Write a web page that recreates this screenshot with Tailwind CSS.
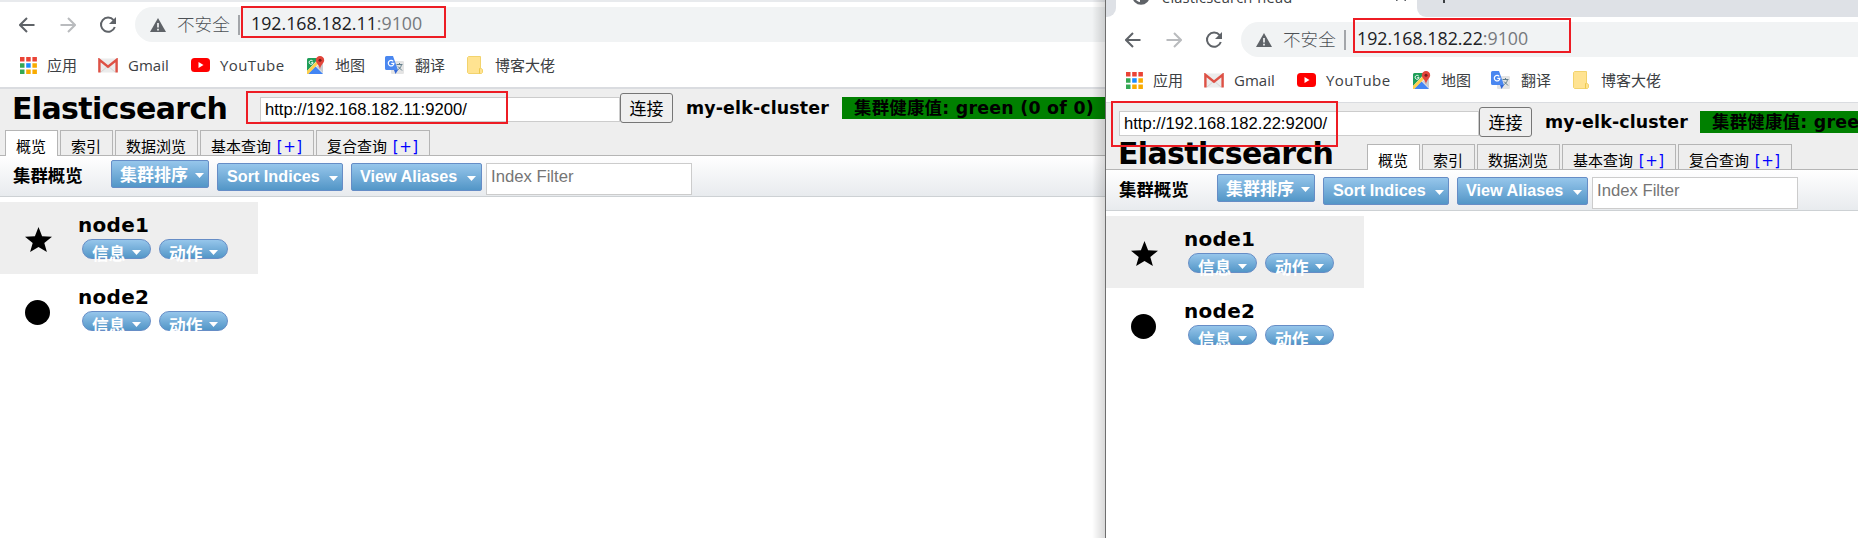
<!DOCTYPE html>
<html lang="zh-CN">

<head>
  <meta charset="UTF-8" />
  <meta name="viewport" content="width=device-width, initial-scale=1.0" />
  <title>elasticsearch-head</title>
  <script src="https://cdn.jsdelivr.net/npm/@tailwindcss/browser@4"></script>
</head>

<body class="bg-white overflow-hidden">
  <!-- Shared icons -->
  <svg class="hidden">
    <symbol id="arrow" viewBox="0 0 16 16">
      <path d="M15.5 8H1.5M8 1L1 8l7 7" fill="none" stroke="currentColor" stroke-width="2" />
    </symbol>
    <symbol id="reload" viewBox="0 0 18 18">
      <path d="M14.6 4.2A7.1 7.1 0 1 0 15.8 11" fill="none" stroke="currentColor" stroke-width="2" />
      <path d="M17 1v7h-7z" fill="currentColor" />
    </symbol>
    <symbol id="warning" viewBox="0 0 16 14">
      <path d="M8 0l8 14H0z" fill="#5f6368" />
      <path d="M8 5v4.5M8 10.7v1.8" stroke="#f1f3f4" stroke-width="1.7" />
    </symbol>
    <symbol id="apps" viewBox="0 0 17 17">
      <path d="M0 0h4.5v4.5H0zM6.2 0h4.5v4.5H6.2zM12.4 0h4.5v4.5h-4.5z" fill="#ea4335" />
      <path d="M0 6.2h4.5v4.5H0zM0 12.4h4.5v4.5H0z" fill="#34a853" />
      <path d="M6.2 6.2h4.5v4.5H6.2z" fill="#1a8cff" />
      <path d="M12.4 6.2h4.5v4.5h-4.5zM6.2 12.4h4.5v4.5H6.2zM12.4 12.4h4.5v4.5h-4.5z" fill="#f9ab00" />
    </symbol>
    <symbol id="gmail" viewBox="0 0 20 15">
      <rect x=".5" y=".5" width="19" height="14" rx="1.5" fill="#ececec" />
      <path d="M3 14l7-6 7 6" fill="none" stroke="#d5d5d5" />
      <path d="M1.4 14.5V1.8L10 8.6l8.6-6.8v12.7" fill="none" stroke="#de5145" stroke-width="2.4" />
    </symbol>
    <symbol id="youtube" viewBox="0 0 19 14">
      <rect width="19" height="14" rx="3.5" fill="#f00" />
      <path d="M7.5 4v6l5-3z" fill="#fff" />
    </symbol>
    <symbol id="maps" viewBox="0 0 19 19">
      <rect x="1" y="2" width="16" height="16" rx="1.5" fill="#e8eaed" />
      <path d="M1 3.5A1.5 1.5 0 0 1 2.5 2H13L1 15z" fill="#1e9e58" />
      <path d="M2 18l7.5-7.5L17 18z" fill="#4285f4" />
      <path d="M1 15L11 5l2 2L2.5 18H1z" fill="#ffd04c" />
      <path d="M2.5 18l7-7 7 7z" fill="#4285f4" />
      <path d="M10.5 10.5L17 17V8z" fill="#c9ccd1" />
      <path d="M6.8 5.2a2 2 0 1 0 .3 1.5H5.2" fill="none" stroke="#fff" stroke-width="1" />
      <path d="M14 0a4.2 4.2 0 0 1 4.2 4.2c0 3-3.7 4.3-4.2 9.300-.5-5-4.200-6.300-4.200-9.300A4.200 4.200 0 0 1 14 0z" fill="#e2453a" />
      <circle cx="14" cy="4.2" r="1.5" fill="#7b1e18" />
    </symbol>
    <symbol id="translate" viewBox="0 0 19 19">
      <rect x="6" y="5" width="13" height="13" rx="1.2" fill="#e4e4e4" />
      <path d="M11.5 8.5h6M14.5 7v1.5M16.5 8.5c-.5 3-2.500 4.500-4 5.500M13 10.500l4 4" fill="none" stroke="#607d8b" />
      <path d="M1.5 0H8l5 14H1.5A1.5 1.5 0 0 1 0 12.5v-11A1.5 1.5 0 0 1 1.5 0z" fill="#4a87f0" />
      <path d="M9 14h4l-2.5 4z" fill="#3367d6" />
      <path d="M8.200 5.300a2.800 2.800 0 1 0 .7 2H6.300" fill="none" stroke="#fff" stroke-width="1.2" />
    </symbol>
    <symbol id="folder" viewBox="0 0 16 18">
      <path d="M1.5.5h12V12l2 1.500v3l-1 1h-13l-1-1v-15z" fill="#ffe391" stroke="#f2d36d" />
      <path d="M13.5 12.5h-1v5" fill="none" stroke="#ecc94e" />
    </symbol>
    <symbol id="star" viewBox="0 0 27 25">
      <path d="M13.5 0l3.600 9.300 9.900.5-7.700 6.200 2.600 9-8.400-5-8.400 5 2.600-9L0 9.800l9.900-.5z" />
    </symbol>
    <symbol id="caret" viewBox="0 0 9 5">
      <path d="M0 0h9L4.500 5z" fill="#fff" />
    </symbol>
  </svg>

  <div class="relative flex w-[1858px] h-[538px] overflow-hidden">

    <!-- Left window -->
    <div class="relative w-[1105px] h-full shrink-0 overflow-hidden bg-white text-black">
      <div class="h-[2px] bg-[#e8eaed]"></div>
      <div class="h-[45px] pt-[5px] flex">
        <div class="flex items-center h-[35px] w-[135px] shrink-0 pl-[19px] text-[#5f6368]">
          <svg class="w-[16px] h-[16px] mr-[25px]"><use href="#arrow" /></svg>
          <svg class="w-[16px] h-[16px] mr-[23px] -scale-x-100 text-[#b9bbbe]"><use href="#arrow" /></svg>
          <svg class="w-[18px] h-[18px]"><use href="#reload" /></svg>
        </div>
        <div class="flex items-center h-[35px] flex-1 rounded-l-full bg-[#f1f3f4] pl-[15px] whitespace-nowrap">
          <svg class="w-[16px] h-[14px] mr-[11px]"><use href="#warning" /></svg>
          <span class="w-[61px] pb-[2px] font-['Noto_Sans_CJK_SC',sans-serif] font-light text-[17.6px] leading-[20px] text-[#4d5156]">不安全</span>
          <span class="w-[2px] h-[20px] bg-[#a3a6aa]"></span>
          <span class="ml-[11px] pb-[3px] font-['Open_Sans',sans-serif] text-[17.8px] leading-[24px] text-[#202124]">192.168.182.11<span class="text-[#76797d]">:9100</span></span>
        </div>
      </div>
      <div class="flex items-center h-[40px] pb-[4px] pl-[20px] font-['Open_Sans','Noto_Sans_CJK_SC',sans-serif] text-[15px] leading-[20px] text-[#3c4043] whitespace-nowrap">
        <svg class="w-[17px] h-[17px] shrink-0"><use href="#apps" /></svg>
        <span class="ml-[10px] w-[51px]">应用</span>
        <svg class="w-[20px] h-[15px] shrink-0"><use href="#gmail" /></svg>
        <span class="ml-[10px] w-[63px]">Gmail</span>
        <svg class="w-[19px] h-[14px] shrink-0"><use href="#youtube" /></svg>
        <span class="ml-[10px] w-[86px] tracking-[0.4px]">YouTube</span>
        <svg class="w-[19px] h-[19px] shrink-0"><use href="#maps" /></svg>
        <span class="ml-[10px] w-[50px]">地图</span>
        <svg class="w-[19px] h-[19px] shrink-0"><use href="#translate" /></svg>
        <span class="ml-[11px] w-[52px]">翻译</span>
        <svg class="w-[16px] h-[18px] shrink-0"><use href="#folder" /></svg>
        <span class="ml-[12px]">博客大佬</span>
      </div>
      <div class="h-[2px] bg-[#dadce0]"></div>

      <!-- elasticsearch-head header -->
      <div class="h-[67px] bg-[#eee] border-b border-[#b5b5b5] font-['DejaVu_Sans','Noto_Sans_CJK_SC',sans-serif] whitespace-nowrap">
        <div class="flex h-[41px] pl-[12px]">
          <h1 class="w-[248px] shrink-0 pt-[2px] text-[30px] leading-[36px] font-bold tracking-[-0.65px]">Elasticsearch</h1>
          <div class="mt-[8px] w-[360px] h-[25px] shrink-0 border border-[#ccc] bg-white pl-[4px] font-['Liberation_Sans',sans-serif] text-[16.6px] leading-[23px]">http://192.168.182.11:9200/</div>
          <div class="mt-[4px] w-[53px] h-[30px] shrink-0 rounded-[3px] border border-[#767676] bg-[#efefef] text-center text-[17px] leading-[30px]">连接</div>
          <div class="ml-[13px] mt-[8px] w-[156px] shrink-0 text-[17.4px] leading-[23px] font-bold tracking-[0.15px]">my-elk-cluster</div>
          <div class="mt-[8px] h-[22px] flex-1 bg-[#008000] pl-[12px] text-[17.4px] leading-[23px] font-bold tracking-[0.25px]">集群健康值: green (0 of 0)</div>
        </div>
        <div class="flex h-[26px] pl-[5px] gap-[2px] text-[15px] leading-[32px]">
          <div class="w-[53px] h-[26px] border border-b-0 border-[#b5b5b5] bg-white pl-[10px]">概览</div>
          <div class="w-[53px] h-[25px] border border-b-0 border-[#b5b5b5] pl-[10px]">索引</div>
          <div class="w-[83px] h-[25px] border border-b-0 border-[#b5b5b5] pl-[10px]">数据浏览</div>
          <div class="w-[114px] h-[25px] border border-b-0 border-[#b5b5b5] pl-[10px]">基本查询 <span class="ml-[1px] text-[#00f] tracking-[0.5px]">[+]</span></div>
          <div class="w-[114px] h-[25px] border border-b-0 border-[#b5b5b5] pl-[10px]">复合查询 <span class="ml-[1px] text-[#00f] tracking-[0.5px]">[+]</span></div>
        </div>
      </div>

      <!-- Cluster overview toolbar -->
      <div class="flex h-[41px] border-b border-[#cdd1d4] bg-linear-to-b from-white to-[#e8ebee] pl-[13px] font-['Liberation_Sans','Noto_Sans_CJK_SC',sans-serif] text-[17px] whitespace-nowrap">
        <div class="w-[98px] shrink-0 text-[17.4px] leading-[40px] font-bold">集群概览</div>
        <div class="flex items-center mt-[4px] mr-[8px] w-[98px] h-[28px] shrink-0 rounded-[2px] border border-[#668dc6] bg-linear-to-b from-[#96c6eb] to-[#5296c7] pl-[8px] font-bold text-white">
          <span class="w-[75px] pt-[4px]">集群排序</span><svg class="w-[9px] h-[5px] mt-[3px]"><use href="#caret" /></svg>
        </div>
        <div class="flex items-center mt-[7px] mr-[8px] w-[126px] h-[28px] shrink-0 rounded-[2px] border border-[#668dc6] bg-linear-to-b from-[#96c6eb] to-[#5296c7] pl-[9px] font-bold text-white">
          <span class="w-[102px] pb-[2px] text-[16.2px]">Sort Indices</span><svg class="w-[9px] h-[5px] mt-[3px]"><use href="#caret" /></svg>
        </div>
        <div class="flex items-center mt-[7px] mr-[4px] w-[131px] h-[28px] shrink-0 rounded-[2px] border border-[#668dc6] bg-linear-to-b from-[#96c6eb] to-[#5296c7] pl-[8px] font-bold text-white">
          <span class="w-[107px] pb-[2px] text-[16.2px]">View Aliases</span><svg class="w-[9px] h-[5px] mt-[3px]"><use href="#caret" /></svg>
        </div>
        <div class="mt-[7px] w-[206px] h-[32px] shrink-0 border border-[#ccc] bg-white pl-[4px] text-[16.7px] leading-[25px] text-[#757575]">Index Filter</div>
      </div>

      <!-- Node list -->
      <div class="pt-[5px] font-['DejaVu_Sans','Noto_Sans_CJK_SC',sans-serif] font-bold text-[20px]">
        <div class="flex w-[258px] h-[72px] bg-[#eee] pl-[25px]">
          <svg class="w-[27px] h-[25px] mt-[25px] mr-[26px]"><use href="#star" /></svg>
          <div>
            <div class="pt-[10px] pb-[1px] leading-[26px] tracking-[0.3px]">node1</div>
            <div class="flex gap-[8px] pl-[4px] text-[16.7px] text-white">
              <div class="flex w-[69px] h-[20px] rounded-full border border-[#668dc6] bg-linear-to-b from-[#96c6eb] to-[#5296c7] pl-[9px]">
                <span class="w-[40px] h-[22px] overflow-hidden leading-[28px]">信息</span><svg class="w-[9px] h-[5px] mt-[10px]"><use href="#caret" /></svg>
              </div>
              <div class="flex w-[69px] h-[20px] rounded-full border border-[#668dc6] bg-linear-to-b from-[#96c6eb] to-[#5296c7] pl-[9px]">
                <span class="w-[40px] h-[22px] overflow-hidden leading-[28px]">动作</span><svg class="w-[9px] h-[5px] mt-[10px]"><use href="#caret" /></svg>
              </div>
            </div>
          </div>
        </div>
        <div class="flex w-[258px] h-[72px] pl-[25px]">
          <div class="w-[25px] h-[25px] mt-[26px] mr-[28px] rounded-full bg-black"></div>
          <div>
            <div class="pt-[10px] pb-[1px] leading-[26px] tracking-[0.3px]">node2</div>
            <div class="flex gap-[8px] pl-[4px] text-[16.7px] text-white">
              <div class="flex w-[69px] h-[20px] rounded-full border border-[#668dc6] bg-linear-to-b from-[#96c6eb] to-[#5296c7] pl-[9px]">
                <span class="w-[40px] h-[22px] overflow-hidden leading-[28px]">信息</span><svg class="w-[9px] h-[5px] mt-[10px]"><use href="#caret" /></svg>
              </div>
              <div class="flex w-[69px] h-[20px] rounded-full border border-[#668dc6] bg-linear-to-b from-[#96c6eb] to-[#5296c7] pl-[9px]">
                <span class="w-[40px] h-[22px] overflow-hidden leading-[28px]">动作</span><svg class="w-[9px] h-[5px] mt-[10px]"><use href="#caret" /></svg>
              </div>
            </div>
          </div>
        </div>
      </div>

      <!-- Shadow cast by the right window -->
      <div class="absolute right-0 top-0 w-[13px] h-full bg-linear-to-r from-black/0 to-black/15"></div>
    </div>

    <!-- Right window -->
    <div class="w-[753px] h-full shrink-0 overflow-hidden border-l border-[#6e6e6e] bg-white text-black">
      <div class="flex h-[17px] overflow-hidden bg-white">
        <div class="w-[10px] h-[17px] shrink-0 rounded-br-[9px] bg-[#dee1e6]"></div>
        <div class="flex w-[301px] h-[17px] shrink-0 pl-[16px] font-['Open_Sans',sans-serif] text-[14.7px] text-[#3c4043]">
          <svg class="w-[18px] h-[18px] -mt-[13px] mr-[12px]" viewBox="0 0 18 18">
            <circle cx="9" cy="9" r="7.5" fill="none" stroke="#5f6368" stroke-width="2.5" />
            <path d="M8 17v-4l3-2 4 1-3 5z" fill="#5f6368" />
          </svg>
          <span class="w-[234px] leading-[20px] -mt-[13px] tracking-[0.15px]">elasticsearch-head</span>
          <svg class="w-[10px] h-[10px] -mt-[9px]" viewBox="0 0 10 10"><path d="M0 0l10 10M10 0L0 10" stroke="#5f6368" stroke-width="1.5" /></svg>
        </div>
        <div class="h-[17px] flex-1 rounded-bl-[9px] bg-[#dee1e6] pl-[20px]">
          <svg class="w-[14px] h-[14px] -mt-[11px]" viewBox="0 0 14 14"><path d="M7 0v14M0 7h14" stroke="#3c4043" stroke-width="2" /></svg>
        </div>
      </div>
      <div class="h-[45px] pt-[5px] flex">
        <div class="flex items-center h-[35px] w-[135px] shrink-0 pl-[19px] text-[#5f6368]">
          <svg class="w-[16px] h-[16px] mr-[25px]"><use href="#arrow" /></svg>
          <svg class="w-[16px] h-[16px] mr-[23px] -scale-x-100 text-[#b9bbbe]"><use href="#arrow" /></svg>
          <svg class="w-[18px] h-[18px]"><use href="#reload" /></svg>
        </div>
        <div class="flex items-center h-[35px] flex-1 rounded-l-full bg-[#f1f3f4] pl-[15px] whitespace-nowrap">
          <svg class="w-[16px] h-[14px] mr-[11px]"><use href="#warning" /></svg>
          <span class="w-[61px] pb-[2px] font-['Noto_Sans_CJK_SC',sans-serif] font-light text-[17.6px] leading-[20px] text-[#4d5156]">不安全</span>
          <span class="w-[2px] h-[20px] bg-[#a3a6aa]"></span>
          <span class="ml-[11px] pb-[3px] font-['Open_Sans',sans-serif] text-[17.8px] leading-[24px] text-[#202124]">192.168.182.22<span class="text-[#76797d]">:9100</span></span>
        </div>
      </div>
      <div class="flex items-center h-[40px] pb-[4px] pl-[20px] font-['Open_Sans','Noto_Sans_CJK_SC',sans-serif] text-[15px] leading-[20px] text-[#3c4043] whitespace-nowrap">
        <svg class="w-[17px] h-[17px] shrink-0"><use href="#apps" /></svg>
        <span class="ml-[10px] w-[51px]">应用</span>
        <svg class="w-[20px] h-[15px] shrink-0"><use href="#gmail" /></svg>
        <span class="ml-[10px] w-[63px]">Gmail</span>
        <svg class="w-[19px] h-[14px] shrink-0"><use href="#youtube" /></svg>
        <span class="ml-[10px] w-[86px] tracking-[0.4px]">YouTube</span>
        <svg class="w-[19px] h-[19px] shrink-0"><use href="#maps" /></svg>
        <span class="ml-[10px] w-[50px]">地图</span>
        <svg class="w-[19px] h-[19px] shrink-0"><use href="#translate" /></svg>
        <span class="ml-[11px] w-[52px]">翻译</span>
        <svg class="w-[16px] h-[18px] shrink-0"><use href="#folder" /></svg>
        <span class="ml-[12px]">博客大佬</span>
      </div>
      <div class="h-[1px] bg-[#dadce0]"></div>

      <!-- Header wraps here: the connect form sits above the title -->
      <div class="h-[67px] bg-[#eee] border-b border-[#b5b5b5] font-['DejaVu_Sans','Noto_Sans_CJK_SC',sans-serif] whitespace-nowrap">
        <div class="flex h-[41px] pl-[13px]">
          <div class="mt-[8px] w-[360px] h-[25px] shrink-0 border border-[#ccc] bg-white pl-[4px] font-['Liberation_Sans',sans-serif] text-[16.6px] leading-[23px]">http://192.168.182.22:9200/</div>
          <div class="mt-[4px] w-[53px] h-[30px] shrink-0 rounded-[3px] border border-[#767676] bg-[#efefef] text-center text-[17px] leading-[30px]">连接</div>
          <div class="ml-[13px] mt-[8px] w-[155px] shrink-0 text-[17.4px] leading-[23px] font-bold tracking-[0.15px]">my-elk-cluster</div>
          <div class="mt-[8px] h-[22px] flex-1 overflow-hidden bg-[#008000] pl-[12px] text-[17.4px] leading-[23px] font-bold tracking-[0.25px]">集群健康值: green (0 of 0)</div>
        </div>
        <div class="flex h-[26px] pl-[12px] gap-[2px] text-[15px] leading-[32px]">
          <h1 class="w-[247px] shrink-0 -mt-[8px] text-[30px] leading-[36px] font-bold tracking-[-0.65px]">Elasticsearch</h1>
          <div class="w-[53px] h-[26px] border border-b-0 border-[#b5b5b5] bg-white pl-[10px]">概览</div>
          <div class="w-[53px] h-[25px] border border-b-0 border-[#b5b5b5] pl-[10px]">索引</div>
          <div class="w-[83px] h-[25px] border border-b-0 border-[#b5b5b5] pl-[10px]">数据浏览</div>
          <div class="w-[114px] h-[25px] border border-b-0 border-[#b5b5b5] pl-[10px]">基本查询 <span class="ml-[1px] text-[#00f] tracking-[0.5px]">[+]</span></div>
          <div class="w-[114px] h-[25px] border border-b-0 border-[#b5b5b5] pl-[10px]">复合查询 <span class="ml-[1px] text-[#00f] tracking-[0.5px]">[+]</span></div>
        </div>
      </div>

      <div class="flex h-[41px] border-b border-[#cdd1d4] bg-linear-to-b from-white to-[#e8ebee] pl-[13px] font-['Liberation_Sans','Noto_Sans_CJK_SC',sans-serif] text-[17px] whitespace-nowrap">
        <div class="w-[98px] shrink-0 text-[17.4px] leading-[40px] font-bold">集群概览</div>
        <div class="flex items-center mt-[4px] mr-[8px] w-[98px] h-[28px] shrink-0 rounded-[2px] border border-[#668dc6] bg-linear-to-b from-[#96c6eb] to-[#5296c7] pl-[8px] font-bold text-white">
          <span class="w-[75px] pt-[4px]">集群排序</span><svg class="w-[9px] h-[5px] mt-[3px]"><use href="#caret" /></svg>
        </div>
        <div class="flex items-center mt-[7px] mr-[8px] w-[126px] h-[28px] shrink-0 rounded-[2px] border border-[#668dc6] bg-linear-to-b from-[#96c6eb] to-[#5296c7] pl-[9px] font-bold text-white">
          <span class="w-[102px] pb-[2px] text-[16.2px]">Sort Indices</span><svg class="w-[9px] h-[5px] mt-[3px]"><use href="#caret" /></svg>
        </div>
        <div class="flex items-center mt-[7px] mr-[4px] w-[131px] h-[28px] shrink-0 rounded-[2px] border border-[#668dc6] bg-linear-to-b from-[#96c6eb] to-[#5296c7] pl-[8px] font-bold text-white">
          <span class="w-[107px] pb-[2px] text-[16.2px]">View Aliases</span><svg class="w-[9px] h-[5px] mt-[3px]"><use href="#caret" /></svg>
        </div>
        <div class="mt-[7px] w-[206px] h-[32px] shrink-0 border border-[#ccc] bg-white pl-[4px] text-[16.7px] leading-[25px] text-[#757575]">Index Filter</div>
      </div>

      <div class="pt-[5px] font-['DejaVu_Sans','Noto_Sans_CJK_SC',sans-serif] font-bold text-[20px]">
        <div class="flex w-[258px] h-[72px] bg-[#eee] pl-[25px]">
          <svg class="w-[27px] h-[25px] mt-[25px] mr-[26px]"><use href="#star" /></svg>
          <div>
            <div class="pt-[10px] pb-[1px] leading-[26px] tracking-[0.3px]">node1</div>
            <div class="flex gap-[8px] pl-[4px] text-[16.7px] text-white">
              <div class="flex w-[69px] h-[20px] rounded-full border border-[#668dc6] bg-linear-to-b from-[#96c6eb] to-[#5296c7] pl-[9px]">
                <span class="w-[40px] h-[22px] overflow-hidden leading-[28px]">信息</span><svg class="w-[9px] h-[5px] mt-[10px]"><use href="#caret" /></svg>
              </div>
              <div class="flex w-[69px] h-[20px] rounded-full border border-[#668dc6] bg-linear-to-b from-[#96c6eb] to-[#5296c7] pl-[9px]">
                <span class="w-[40px] h-[22px] overflow-hidden leading-[28px]">动作</span><svg class="w-[9px] h-[5px] mt-[10px]"><use href="#caret" /></svg>
              </div>
            </div>
          </div>
        </div>
        <div class="flex w-[258px] h-[72px] pl-[25px]">
          <div class="w-[25px] h-[25px] mt-[26px] mr-[28px] rounded-full bg-black"></div>
          <div>
            <div class="pt-[10px] pb-[1px] leading-[26px] tracking-[0.3px]">node2</div>
            <div class="flex gap-[8px] pl-[4px] text-[16.7px] text-white">
              <div class="flex w-[69px] h-[20px] rounded-full border border-[#668dc6] bg-linear-to-b from-[#96c6eb] to-[#5296c7] pl-[9px]">
                <span class="w-[40px] h-[22px] overflow-hidden leading-[28px]">信息</span><svg class="w-[9px] h-[5px] mt-[10px]"><use href="#caret" /></svg>
              </div>
              <div class="flex w-[69px] h-[20px] rounded-full border border-[#668dc6] bg-linear-to-b from-[#96c6eb] to-[#5296c7] pl-[9px]">
                <span class="w-[40px] h-[22px] overflow-hidden leading-[28px]">动作</span><svg class="w-[9px] h-[5px] mt-[10px]"><use href="#caret" /></svg>
              </div>
            </div>
          </div>
        </div>
      </div>
    </div>

    <!-- Red annotation boxes -->
    <div class="absolute left-[241px] top-[6px] w-[205px] h-[32px] border-2 border-[#ed1c24]"></div>
    <div class="absolute left-[246px] top-[91px] w-[262px] h-[33px] border-2 border-[#ed1c24]"></div>
    <div class="absolute left-[1353px] top-[18px] w-[218px] h-[35px] border-2 border-[#ed1c24]"></div>
    <div class="absolute left-[1111px] top-[101px] w-[227px] h-[46px] border-2 border-[#ed1c24]"></div>
  </div>
</body>

</html>
